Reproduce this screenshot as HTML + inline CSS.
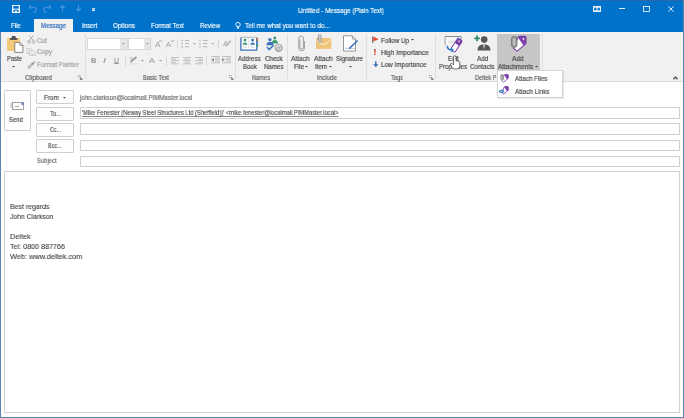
<!DOCTYPE html>
<html><head><meta charset="utf-8">
<style>
*{margin:0;padding:0;box-sizing:border-box}
html,body{width:684px;height:418px;overflow:hidden;background:#fff;font-family:"Liberation Sans",sans-serif}
.a{position:absolute}
.t{position:absolute;white-space:nowrap;line-height:10px;transform-origin:0 0;will-change:transform;-webkit-text-stroke:0.15px currentColor;font-family:"Liberation Sans",sans-serif}
svg{overflow:visible}
</style></head><body>
<div class="a" style="left:0px;top:0px;width:684px;height:32px;background:#0072c9"></div>
<div class="a" style="left:0px;top:0px;width:684px;height:1px;background:#2a6aac"></div>
<div class="t" style="left:298.00px;top:6px;font-size:7.40px;color:#fff;transform:scaleX(0.8547);">Untitled - Message (Plain Text)</div>
<svg class="a" style="left:12px;top:5px" width="8" height="8" viewBox="0 0 8 8"><rect x="0" y="0" width="8" height="8" fill="#f4f8fc"/><rect x="1.3" y="1" width="5.4" height="2.7" fill="#0072c9"/><rect x="1.5" y="4.7" width="5" height="2.3" fill="#0072c9"/><rect x="3" y="5.6" width="2" height="2.4" fill="#f4f8fc"/></svg>
<svg class="a" style="left:27.5px;top:5px" width="9" height="8" viewBox="0 0 9 8"><path d="M1 2.3 L3 0.5 M1 2.3 L3 4.1 M1.2 2.3 H5.5 Q8 2.3 8 5 Q8 7.5 5 7.5" stroke="#4a98dc" stroke-width="1.1" fill="none"/></svg>
<svg class="a" style="left:42.5px;top:5px" width="9" height="8" viewBox="0 0 9 8"><path d="M8 2.3 L6 0.5 M8 2.3 L6 4.1 M7.8 2.3 H3.5 Q1 2.3 1 5 Q1 7.5 4 7.5" stroke="#4a98dc" stroke-width="1.1" fill="none"/></svg>
<svg class="a" style="left:60px;top:5px" width="6" height="7" viewBox="0 0 6 7"><path d="M2.6 1 V6.5 M0.5 3 L2.6 0.9 L4.7 3" stroke="#4a98dc" stroke-width="1.1" fill="none"/></svg>
<svg class="a" style="left:75.5px;top:5px" width="6" height="7" viewBox="0 0 6 7"><path d="M2.6 0 V5.5 M0.5 3.5 L2.6 5.6 L4.7 3.5" stroke="#4a98dc" stroke-width="1.1" fill="none"/></svg>
<svg class="a" style="left:91.5px;top:8px" width="4" height="4" viewBox="0 0 4 4"><rect x="0" y="0" width="3" height="1" fill="#bcd6ee"/><path d="M0 1.5 H3 V2.5 L1.5 3.2 L0 2.5Z" fill="#fff"/></svg>
<svg class="a" style="left:593px;top:6px" width="8" height="6" viewBox="0 0 8 6"><rect x="0" y="0" width="8" height="6" fill="#e8f1fa"/><ellipse cx="2.3" cy="3" rx="1.3" ry="1.5" fill="#0072c9"/><ellipse cx="5.7" cy="3" rx="1.3" ry="1.5" fill="#0072c9"/></svg>
<div class="a" style="left:619px;top:8px;width:6px;height:1px;background:#e0ecf8"></div>
<svg class="a" style="left:643px;top:6px" width="7" height="6" viewBox="0 0 7 6"><rect x="0.5" y="0.5" width="6" height="5" fill="none" stroke="#e8f1fa" stroke-width="0.9"/></svg>
<svg class="a" style="left:668px;top:6px" width="6" height="6" viewBox="0 0 6 6"><path d="M0.3 0.3 L5.7 5.7 M5.7 0.3 L0.3 5.7" stroke="#f0f6fc" stroke-width="0.9"/></svg>
<div class="a" style="left:34px;top:19px;width:39px;height:13px;background:#f1f1f1"></div>
<div class="t" style="left:11.40px;top:21px;font-size:7.40px;color:#fff;transform:scaleX(0.8051);">File</div>
<div class="t" style="left:41.00px;top:21px;font-size:7.40px;color:#1f63b5;transform:scaleX(0.8327);">Message</div>
<div class="t" style="left:81.60px;top:21px;font-size:7.40px;color:#fff;transform:scaleX(0.8214);">Insert</div>
<div class="t" style="left:112.60px;top:21px;font-size:7.40px;color:#fff;transform:scaleX(0.8627);">Options</div>
<div class="t" style="left:151.00px;top:21px;font-size:7.40px;color:#fff;transform:scaleX(0.8478);">Format Text</div>
<div class="t" style="left:200.00px;top:21px;font-size:7.40px;color:#fff;transform:scaleX(0.8243);">Review</div>
<svg class="a" style="left:235px;top:22px" width="6" height="7" viewBox="0 0 6 7"><circle cx="3" cy="2.6" r="2.2" fill="none" stroke="#fff" stroke-width="0.9"/><path d="M2 5.5 H4 M2.2 6.5 H3.8" stroke="#fff" stroke-width="0.8"/></svg>
<div class="t" style="left:245.00px;top:21px;font-size:7.40px;color:#fff;transform:scaleX(0.8720);">Tell me what you want to do...</div>
<div class="a" style="left:0px;top:32px;width:684px;height:49px;background:#f1f1f1"></div>
<div class="a" style="left:0px;top:81px;width:684px;height:1px;background:#dcdcdc"></div>
<div class="a" style="left:0px;top:32px;width:1px;height:386px;background:#5d84ae"></div>
<div class="a" style="left:683px;top:0px;width:1px;height:418px;background:#5d84ae"></div>
<div class="a" style="left:0px;top:417px;width:684px;height:1px;background:#5d84ae"></div>
<div class="a" style="left:85px;top:34px;width:1px;height:45px;background:#dedede"></div>
<div class="a" style="left:235px;top:34px;width:1px;height:45px;background:#dedede"></div>
<div class="a" style="left:287px;top:34px;width:1px;height:45px;background:#dedede"></div>
<div class="a" style="left:366px;top:34px;width:1px;height:45px;background:#dedede"></div>
<div class="a" style="left:435px;top:34px;width:1px;height:45px;background:#dedede"></div>
<div class="a" style="left:542px;top:34px;width:1px;height:45px;background:#dedede"></div>
<svg class="a" style="left:78px;top:75px" width="5" height="5" viewBox="0 0 5 5"><path d="M0.5 3 V0.5 H3" stroke="#aaa" stroke-width="0.8" fill="none"/><path d="M4.3 4.3 L2 2 M4.5 4.5 H2.3 V2.3" stroke="#777" stroke-width="0.9" fill="none"/></svg>
<svg class="a" style="left:229px;top:75px" width="5" height="5" viewBox="0 0 5 5"><path d="M0.5 3 V0.5 H3" stroke="#aaa" stroke-width="0.8" fill="none"/><path d="M4.3 4.3 L2 2 M4.5 4.5 H2.3 V2.3" stroke="#777" stroke-width="0.9" fill="none"/></svg>
<svg class="a" style="left:429px;top:75px" width="5" height="5" viewBox="0 0 5 5"><path d="M0.5 3 V0.5 H3" stroke="#aaa" stroke-width="0.8" fill="none"/><path d="M4.3 4.3 L2 2 M4.5 4.5 H2.3 V2.3" stroke="#777" stroke-width="0.9" fill="none"/></svg>
<div class="t" style="left:25.00px;top:73px;font-size:7.00px;color:#5c5c5c;transform:scaleX(0.9012);">Clipboard</div>
<div class="t" style="left:142.90px;top:73px;font-size:7.00px;color:#5c5c5c;transform:scaleX(0.8183);">Basic Text</div>
<div class="t" style="left:252.00px;top:73px;font-size:7.00px;color:#5c5c5c;transform:scaleX(0.8119);">Names</div>
<div class="t" style="left:316.80px;top:73px;font-size:7.00px;color:#5c5c5c;transform:scaleX(0.8861);">Include</div>
<div class="t" style="left:391.00px;top:73px;font-size:7.00px;color:#5c5c5c;transform:scaleX(0.8049);">Tags</div>
<div class="t" style="left:475.00px;top:73px;font-size:7.00px;color:#5c5c5c;transform:scaleX(0.8127);">Deltek P</div>
<svg class="a" style="left:673px;top:75.5px" width="5" height="4" viewBox="0 0 5 4"><path d="M0.5 3.3 L2.5 1 L4.5 3.3" stroke="#555" stroke-width="1.4" fill="none"/></svg>
<svg class="a" style="left:6px;top:35px" width="18" height="19" viewBox="0 0 18 19"><rect x="1.1" y="3.1" width="12.7" height="12.9" fill="#f3c878"/><path d="M4 3 H11.4 V5 H4Z M5.4 3 L6.2 1 H9.2 L10 3Z" fill="#555"/><path d="M8.8 7.4 H13.9 L16.9 10.4 V17.4 H8.8Z" fill="#fff" stroke="#6a6a6a" stroke-width="0.8"/><path d="M13.9 7.4 V10.4 H16.9" fill="none" stroke="#6a6a6a" stroke-width="0.7"/></svg>
<div class="t" style="left:6.60px;top:54px;font-size:7.00px;color:#444;transform:scaleX(0.8380);">Paste</div>
<svg class="a" style="left:12px;top:66px" width="3" height="2" viewBox="0 0 3 2"><path d="M0 0 H3 L1.5 1.5Z" fill="#444"/></svg>
<svg class="a" style="left:26.5px;top:35px" width="9" height="9" viewBox="0 0 9 9"><path d="M2.2 0.5 L6 5.3 M6.3 0.5 L2.5 5.3" stroke="#a8a8a8" stroke-width="0.9"/><circle cx="2" cy="6.8" r="1.4" fill="none" stroke="#a8a8a8" stroke-width="0.9"/><circle cx="6.6" cy="6.8" r="1.4" fill="none" stroke="#a8a8a8" stroke-width="0.9"/></svg>
<div class="t" style="left:37.30px;top:36px;font-size:7.00px;color:#9c9c9c;transform:scaleX(0.8997);">Cut</div>
<svg class="a" style="left:26px;top:48px" width="10" height="8" viewBox="0 0 10 8"><path d="M0.8 0.5 H4.5 L6.5 2.5 V5.5 H0.8Z" fill="#f1f1f1" stroke="#c4c4c4" stroke-width="0.8"/><path d="M3.8 2.5 H7.5 L9.3 4.3 V7.5 H3.8Z" fill="#f4f4f4" stroke="#c4c4c4" stroke-width="0.8"/><path d="M5 5 H8 M5 6.3 H8" stroke="#e0b8c8" stroke-width="0.6"/><path d="M2 2.5 H4 M2 3.8 H3.5" stroke="#d8c0d0" stroke-width="0.6"/></svg>
<div class="t" style="left:37.30px;top:47px;font-size:7.00px;color:#9c9c9c;transform:scaleX(0.9302);">Copy</div>
<svg class="a" style="left:26.5px;top:59.5px" width="9" height="9" viewBox="0 0 9 9"><path d="M2 7.3 L5.3 4" stroke="#bdbdbd" stroke-width="3" stroke-linecap="round"/><path d="M5.2 3.2 L6.3 4.3" stroke="#8e8e8e" stroke-width="2"/><path d="M7.2 1 V3.4 M6 2.2 H8.4" stroke="#a0a0a0" stroke-width="0.7"/></svg>
<div class="t" style="left:37.30px;top:60px;font-size:7.00px;color:#9c9c9c;transform:scaleX(0.9030);">Format Painter</div>
<div class="a" style="left:87px;top:38px;width:41px;height:12px;background:#fff;border:1px solid #d8d8d8"></div>
<div class="a" style="left:120px;top:39px;width:7px;height:10px;background:#e6e6e6"></div>
<svg class="a" style="left:122px;top:43px" width="3" height="2" viewBox="0 0 3 2"><path d="M0 0 H3 L1.5 1.5Z" fill="#999"/></svg>
<div class="a" style="left:128px;top:38px;width:23px;height:12px;background:#fff;border:1px solid #d8d8d8"></div>
<div class="a" style="left:144px;top:39px;width:6px;height:10px;background:#e6e6e6"></div>
<svg class="a" style="left:146px;top:43px" width="3" height="2" viewBox="0 0 3 2"><path d="M0 0 H3 L1.5 1.5Z" fill="#999"/></svg>
<div class="t" style="left:154.50px;top:40px;font-size:8.00px;color:#a0a0a0;transform:scaleX(1.0307);-webkit-text-stroke:0">A</div>
<svg class="a" style="left:159px;top:40px" width="3" height="2" viewBox="0 0 3 2"><path d="M0 2 L1.5 0 L3 2" stroke="#999" stroke-width="0.7" fill="none"/></svg>
<div class="t" style="left:166.40px;top:40px;font-size:6.50px;color:#a0a0a0;transform:scaleX(1.1532);-webkit-text-stroke:0">A</div>
<svg class="a" style="left:171px;top:40px" width="3" height="2" viewBox="0 0 3 2"><path d="M0 0 L1.5 2 L3 0" stroke="#999" stroke-width="0.7" fill="none"/></svg>
<div class="a" style="left:177px;top:40px;width:1px;height:9px;background:#d8d8d8"></div>
<svg class="a" style="left:181px;top:39px" width="16" height="9" viewBox="0 0 16 9"><g fill="#a8a8a8"><circle cx="1.2" cy="1.5" r="0.8"/><circle cx="1.2" cy="4.6" r="0.8"/><circle cx="1.2" cy="7.8" r="0.8"/><rect x="4" y="1" width="4" height="0.8"/><rect x="4" y="4.2" width="4" height="0.8"/><rect x="4" y="7.4" width="4" height="0.8"/><path d="M12 4 H15 L13.5 5.5Z"/></g></svg>
<svg class="a" style="left:199px;top:39px" width="16" height="9" viewBox="0 0 16 9"><g fill="#a8a8a8"><rect x="0.5" y="0.8" width="1" height="1.6"/><rect x="0.5" y="3.9" width="1" height="1.6"/><rect x="0.5" y="7" width="1" height="1.6"/><rect x="4" y="1" width="4.5" height="0.8"/><rect x="4" y="4.2" width="4.5" height="0.8"/><rect x="4" y="7.4" width="4.5" height="0.8"/><path d="M12 4 H15 L13.5 5.5Z"/></g></svg>
<div class="a" style="left:218px;top:40px;width:1px;height:9px;background:#d8d8d8"></div>
<svg class="a" style="left:223px;top:39px" width="9" height="9" viewBox="0 0 9 9"><text x="0" y="7" font-size="8" fill="#a8a8a8" font-family="Liberation Sans">A</text><path d="M3 8 L8.5 2.5 L7 1 L1.5 6.5Z" fill="#b8b8b8" opacity="0.85"/></svg>
<div class="t" style="left:90.60px;top:56px;font-size:6.50px;color:#999;transform:scaleX(1.1071);font-weight:bold">B</div>
<div class="t" style="left:103.00px;top:56px;font-size:6.50px;color:#999;transform:scaleX(1.6613);font-style:italic">I</div>
<div class="t" style="left:114.00px;top:56px;font-size:6.50px;color:#999;transform:scaleX(1.0651);">U</div>
<div class="a" style="left:114px;top:63px;width:5px;height:1px;background:#999"></div>
<div class="a" style="left:125px;top:55px;width:1px;height:11px;background:#d8d8d8"></div>
<svg class="a" style="left:129px;top:56px" width="9" height="9" viewBox="0 0 9 9"><path d="M1.5 6 L7.5 1" stroke="#9a9a9a" stroke-width="1.7"/><path d="M0.5 1.5 L2.5 3.8 M2 0.8 L4 3" stroke="#a8a8a8" stroke-width="0.8"/><rect x="0.5" y="7.6" width="7.5" height="0.7" fill="#d9c6e2"/></svg>
<svg class="a" style="left:141px;top:60px" width="3" height="2" viewBox="0 0 3 2"><path d="M0 0 H3 L1.5 1.5Z" fill="#999"/></svg>
<div class="t" style="left:149.00px;top:56px;font-size:7.00px;color:#a0a0a0;transform:scaleX(1.2422);-webkit-text-stroke:0.1px currentColor">A</div>
<svg class="a" style="left:159px;top:60px" width="3" height="2" viewBox="0 0 3 2"><path d="M0 0 H3 L1.5 1.5Z" fill="#999"/></svg>
<div class="a" style="left:166px;top:55px;width:1px;height:11px;background:#d8d8d8"></div>
<svg class="a" style="left:171px;top:57px" width="8" height="8" viewBox="0 0 8 8"><g fill="#bdbdbd"><rect x="0" y="0.0" width="8" height="0.9"/><rect x="0" y="1.6" width="5" height="0.9"/><rect x="0" y="3.2" width="8" height="0.9"/><rect x="0" y="4.8" width="5" height="0.9"/><rect x="0" y="6.4" width="8" height="0.9"/></g></svg>
<svg class="a" style="left:182.6px;top:57px" width="8" height="8" viewBox="0 0 8 8"><g fill="#bdbdbd"><rect x="0" y="0.0" width="8" height="0.9"/><rect x="1.5" y="1.6" width="5" height="0.9"/><rect x="0" y="3.2" width="8" height="0.9"/><rect x="1.5" y="4.8" width="5" height="0.9"/><rect x="0" y="6.4" width="8" height="0.9"/></g></svg>
<svg class="a" style="left:194.5px;top:57px" width="8" height="8" viewBox="0 0 8 8"><g fill="#bdbdbd"><rect x="0" y="0.0" width="8" height="0.9"/><rect x="3" y="1.6" width="5" height="0.9"/><rect x="0" y="3.2" width="8" height="0.9"/><rect x="3" y="4.8" width="5" height="0.9"/><rect x="0" y="6.4" width="8" height="0.9"/></g></svg>
<div class="a" style="left:206px;top:55px;width:1px;height:11px;background:#d8d8d8"></div>
<svg class="a" style="left:210.6px;top:56px" width="9" height="8" viewBox="0 0 9 8"><g fill="#bdbdbd"><rect x="0" y="0.0" width="9" height="0.9"/><rect x="4" y="1.6" width="5" height="0.9"/><rect x="4" y="3.2" width="5" height="0.9"/><rect x="4" y="4.8" width="5" height="0.9"/><rect x="0" y="6.4" width="9" height="0.9"/></g><path d="M0 3.7 L3 1.9 V5.5Z" fill="#888"/></svg>
<svg class="a" style="left:222px;top:56px" width="9" height="8" viewBox="0 0 9 8"><g fill="#bdbdbd"><rect x="0" y="0.0" width="9" height="0.9"/><rect x="4" y="1.6" width="5" height="0.9"/><rect x="4" y="3.2" width="5" height="0.9"/><rect x="4" y="4.8" width="5" height="0.9"/><rect x="0" y="6.4" width="9" height="0.9"/></g><path d="M3 3.7 L0 1.9 V5.5Z" fill="#888"/></svg>
<svg class="a" style="left:240px;top:36px" width="19" height="16" viewBox="0 0 19 16"><rect x="1" y="1.3" width="15.6" height="12.8" fill="#fff"/><path d="M0.9 1.6 V14.2 H16.7 V1.6" fill="none" stroke="#3d72b8" stroke-width="1.3"/><path d="M0.9 1.6 Q5 0.6 8.8 1.6 Q12.6 0.6 16.7 1.6" fill="none" stroke="#9a9a9a" stroke-width="0.7"/><path d="M8.8 1.8 V13.5" stroke="#d4d4d4" stroke-width="0.7"/><circle cx="5" cy="4" r="1.5" fill="#3f9a73"/><path d="M2.6 8.8 Q2.8 6.5 5 6.5 Q7.2 6.5 7.4 8.8Z" fill="#3f9a73"/><circle cx="12.6" cy="4" r="1.5" fill="#3d72b8"/><path d="M10.2 8.8 Q10.4 6.5 12.6 6.5 Q14.8 6.5 15 8.8Z" fill="#3d72b8"/><path d="M3 10.2 H7 M3 11.6 H7 M10.6 10.2 H14.6 M10.6 11.6 H14.6" stroke="#d0d0d0" stroke-width="0.6"/><rect x="16.6" y="2" width="1.5" height="3" fill="#e2733e"/><rect x="16.6" y="5" width="1.5" height="3" fill="#5b8fd0"/><rect x="16.6" y="8" width="1.5" height="3" fill="#4aa07a"/></svg>
<div class="t" style="left:238.30px;top:54px;font-size:7.00px;color:#444;transform:scaleX(0.8801);">Address</div>
<div class="t" style="left:243.00px;top:62px;font-size:7.00px;color:#444;transform:scaleX(0.8650);">Book</div>
<svg class="a" style="left:265px;top:36px" width="19" height="17" viewBox="0 0 19 17"><circle cx="9.8" cy="1.9" r="1.5" fill="#3f9a73"/><path d="M6.6 7.5 Q6.8 4 9.8 4 Q12.8 4 13 7.5Z" fill="#3f9a73"/><circle cx="4.9" cy="3.6" r="1.7" fill="#3d72b8"/><path d="M1.4 9.2 Q1.6 5.7 4.9 5.7 Q8.2 5.7 8.4 9.2Z" fill="#3d72b8"/><path d="M1.9 11 L4.2 13.6 L8.8 9" stroke="#3d72b8" stroke-width="1.5" fill="none"/><circle cx="13.7" cy="12" r="3.7" fill="#f1f1f1" stroke="#8a8a8a" stroke-width="0.8"/><text x="13.7" y="14.2" font-size="6" text-anchor="middle" fill="#777" font-family="Liberation Sans">@</text></svg>
<div class="t" style="left:264.90px;top:54px;font-size:7.00px;color:#444;transform:scaleX(0.8921);">Check</div>
<div class="t" style="left:264.00px;top:62px;font-size:7.00px;color:#444;transform:scaleX(0.8795);">Names</div>
<svg class="a" style="left:297px;top:35px" width="9" height="17" viewBox="0 0 9 17"><path d="M2.8 4.5 V12 A1.8 1.8 0 0 0 6.4 12 V3.4 A2.3 2.3 0 0 0 1.8 3.4 V13 A2.8 2.8 0 0 0 7.4 13 V6" stroke="#9c9c9c" stroke-width="1" fill="none"/></svg>
<div class="t" style="left:291.40px;top:54px;font-size:7.00px;color:#444;transform:scaleX(0.9323);">Attach</div>
<div class="t" style="left:294.40px;top:62px;font-size:7.00px;color:#444;transform:scaleX(0.8955);">File</div>
<svg class="a" style="left:305px;top:66px" width="3" height="2" viewBox="0 0 3 2"><path d="M0 0 H3 L1.5 1.5Z" fill="#444"/></svg>
<svg class="a" style="left:315px;top:34px" width="17" height="15" viewBox="0 0 17 15"><rect x="1" y="4" width="15.3" height="10.9" fill="#f0c478"/><path d="M1.5 5.5 Q4 11 8.5 10.5 Q12.5 10 16 4.5" stroke="#fff4dc" stroke-width="0.9" fill="none"/><path d="M3.2 6.5 V2 A1.4 1.4 0 0 1 6 2 V7.5 A1.1 1.1 0 0 1 3.8 7.5 V3" stroke="#8a8a8a" stroke-width="0.8" fill="#d8d8e0"/></svg>
<div class="t" style="left:314.00px;top:54px;font-size:7.00px;color:#444;transform:scaleX(0.9373);">Attach</div>
<div class="t" style="left:315.30px;top:62px;font-size:7.00px;color:#444;transform:scaleX(0.8815);">Item</div>
<svg class="a" style="left:329px;top:66px" width="3" height="2" viewBox="0 0 3 2"><path d="M0 0 H3 L1.5 1.5Z" fill="#444"/></svg>
<svg class="a" style="left:343px;top:35px" width="16" height="17" viewBox="0 0 16 17"><path d="M0.5 0.8 H9.3 L12.5 4 V16 H0.5Z" fill="#fff" stroke="#8c8c8c" stroke-width="0.9"/><path d="M9.3 0.8 V4 H12.5" fill="none" stroke="#8c8c8c" stroke-width="0.8"/><path d="M2 13.4 H11.5" stroke="#a8cbea" stroke-width="0.9"/><path d="M6.2 13.6 L14.6 5.5" stroke="#3d72b8" stroke-width="1.5"/></svg>
<div class="t" style="left:336.00px;top:54px;font-size:7.00px;color:#444;transform:scaleX(0.9011);">Signature</div>
<svg class="a" style="left:348.5px;top:66px" width="3" height="2" viewBox="0 0 3 2"><path d="M0 0 H3 L1.5 1.5Z" fill="#444"/></svg>
<svg class="a" style="left:372px;top:36px" width="7" height="7" viewBox="0 0 7 7"><rect x="0" y="0.5" width="1.3" height="6.5" fill="#7a7a7a"/><path d="M1.3 0.6 L6.6 3.2 L1.3 5.6Z" fill="#e8473a"/></svg>
<div class="t" style="left:381.40px;top:36px;font-size:7.00px;color:#444;transform:scaleX(0.8998);">Follow Up</div>
<svg class="a" style="left:411px;top:39px" width="3" height="2" viewBox="0 0 3 2"><path d="M0 0 H3 L1.5 1.5Z" fill="#444"/></svg>
<svg class="a" style="left:373.8px;top:49px" width="2" height="6" viewBox="0 0 2 6"><rect x="0" y="0" width="1.7" height="3.6" fill="#e0584a"/><rect x="0" y="4.4" width="1.7" height="1.5" fill="#e0584a"/></svg>
<div class="t" style="left:381.40px;top:48px;font-size:7.00px;color:#444;transform:scaleX(0.9308);">High Importance</div>
<svg class="a" style="left:372.5px;top:61px" width="6" height="7" viewBox="0 0 6 7"><path d="M2.8 0.2 V4.5" stroke="#3d72b8" stroke-width="1.5"/><path d="M0.2 3.3 L2.8 6.2 L5.4 3.3Z" fill="#3d72b8"/></svg>
<div class="t" style="left:381.40px;top:60px;font-size:7.00px;color:#444;transform:scaleX(0.9117);">Low Importance</div>
<svg class="a" style="left:444px;top:35px" width="19" height="18" viewBox="0 0 19 18"><path d="M1.2 10.2 V1.5 H17.2 V4" fill="none" stroke="#8a8a8a" stroke-width="1"/><rect x="1.7" y="2" width="15" height="8" fill="#f7f7f7"/><path d="M4.5 6 H11 M4.5 7.5 H9" stroke="#cfcfcf" stroke-width="0.7"/><g transform="translate(12.4 10.2) rotate(-56)"><rect x="-7" y="-2.7" width="14" height="5.4" rx="1.6" fill="#fff" stroke="#7d3faa" stroke-width="1"/><path d="M1 -2.7 H5.4 Q7 -2.7 7 -1.1 V1.1 Q7 2.7 5.4 2.7 H1Z" fill="#7d3faa"/><circle cx="4.8" cy="0" r="0.8" fill="#fff"/></g><circle cx="14.3" cy="3.3" r="0.9" fill="#2f7fd0"/><path d="M3.3 10.8 Q3.3 15 7.8 15" stroke="#2f7fd0" stroke-width="1.6" fill="none"/><path d="M7 12.5 L10 15 L7 17.3Z" fill="#2f7fd0"/></svg>
<div class="t" style="left:447.90px;top:54px;font-size:7.00px;color:#444;transform:scaleX(0.8954);">Edit</div>
<div class="t" style="left:439.00px;top:62px;font-size:7.00px;color:#444;transform:scaleX(0.8777);">Properties</div>
<svg class="a" style="left:450px;top:55px" width="11" height="15" viewBox="0 0 11 15"><path d="M3.6 6 V1.8 Q3.6 0.8 4.8 0.8 Q6 0.8 6 1.8 V5.8 Q7.5 5.5 8 6.2 Q9.5 6.2 9.8 7.5 V11 Q9.8 14 7 14 H4.5 Q3 14 2 12.5 L0.6 9.5 Q0.3 8.3 1.5 8.3 Q2.5 8.5 3.6 10Z" fill="#fff" stroke="#333" stroke-width="0.7"/></svg>
<svg class="a" style="left:474px;top:35px" width="17" height="16" viewBox="0 0 17 16"><path d="M3 0.6 V6.2 M0.3 3.4 H5.9" stroke="#2e8b6e" stroke-width="1.7"/><circle cx="10.2" cy="4.6" r="3.3" fill="#555"/><path d="M3.5 15.4 Q3.5 9.4 10 9.2 Q16.5 9.4 16.5 15.4Z" fill="#555"/><path d="M9 9.4 L10 14.5 L11 9.4Z" fill="#ddd"/></svg>
<div class="t" style="left:477.40px;top:54px;font-size:7.00px;color:#444;transform:scaleX(0.9073);">Add</div>
<div class="t" style="left:470.20px;top:62px;font-size:7.00px;color:#444;transform:scaleX(0.8870);">Contacts</div>
<div class="a" style="left:497px;top:34px;width:43px;height:36px;background:#c6c6c6"></div>
<svg class="a" style="left:504px;top:33px" width="24" height="20" viewBox="0 0 24 20"><path d="M14 4.5 Q14.5 3.4 16 3.4 H21 Q22 3.4 22 4.6 V10.5 L13 18.3 L9.5 15 Z" fill="#fff" stroke="#7d3faa" stroke-width="1.1"/><path d="M14 4.5 Q14.5 3.4 16 3.4 H21 Q22 3.4 22 4.6 V10.5 L19.6 12.4 Z" fill="#7d3faa"/><circle cx="19.5" cy="5.8" r="0.9" fill="#fff"/><rect x="7.6" y="3.6" width="5.2" height="10.5" rx="2.6" fill="#a9a9a9" stroke="#7c7c7c" stroke-width="1.2"/><path d="M10.2 5.5 V11.5" stroke="#d8d8d8" stroke-width="0.9"/></svg>
<div class="t" style="left:512.40px;top:54px;font-size:7.00px;color:#444;transform:scaleX(0.9394);">Add</div>
<div class="t" style="left:498.20px;top:62px;font-size:7.00px;color:#444;transform:scaleX(0.8996);">Attachments</div>
<svg class="a" style="left:535px;top:66px" width="3" height="2" viewBox="0 0 3 2"><path d="M0 0 H3 L1.5 1.5Z" fill="#444"/></svg>
<div class="a" style="left:497px;top:70px;width:66px;height:28px;background:#fff;border:1px solid #d4d4d4;box-shadow:1px 1px 1px rgba(0,0,0,0.08)"></div>
<svg class="a" style="left:500px;top:74px" width="10" height="9" viewBox="0 0 10 9"><g transform="scale(0.52) translate(-6 -2.5)"><path d="M14 4.5 Q14.5 3.4 16 3.4 H21 Q22 3.4 22 4.6 V10.5 L13 18.3 L9.5 15 Z" fill="#fff" stroke="#7d3faa" stroke-width="1.6"/><path d="M14 4.5 Q14.5 3.4 16 3.4 H21 Q22 3.4 22 4.6 V10.5 L19.6 12.4 Z" fill="#7d3faa"/><rect x="7.6" y="3.6" width="5.2" height="10.5" rx="2.6" fill="#b0b0b0" stroke="#888" stroke-width="1.6"/></g></svg>
<div class="t" style="left:514.90px;top:74px;font-size:7.00px;color:#444;transform:scaleX(0.8833);">Attach Files</div>
<svg class="a" style="left:500px;top:86px" width="10" height="9" viewBox="0 0 10 9"><g transform="scale(0.52) translate(-6 -2.5)"><path d="M14 4.5 Q14.5 3.4 16 3.4 H21 Q22 3.4 22 4.6 V10.5 L13 18.3 L9.5 15 Z" fill="#fff" stroke="#7d3faa" stroke-width="1.6"/><path d="M14 4.5 Q14.5 3.4 16 3.4 H21 Q22 3.4 22 4.6 V10.5 L19.6 12.4 Z" fill="#7d3faa"/><ellipse cx="9" cy="13" rx="4.5" ry="2.6" fill="#4a86c8" stroke="#2f6db0" stroke-width="1.2"/><path d="M6.5 13 H11" stroke="#fff" stroke-width="1"/></g></svg>
<div class="t" style="left:514.90px;top:87px;font-size:7.00px;color:#444;transform:scaleX(0.8996);">Attach Links</div>
<div class="a" style="left:4px;top:90px;width:27px;height:41px;background:#fdfdfd;border:1px solid #cfcfcf;border-radius:1px"></div>
<svg class="a" style="left:10px;top:102px" width="14" height="8" viewBox="0 0 14 8"><rect x="2.5" y="0.5" width="11" height="7" fill="#fff" stroke="#8a8a8a" stroke-width="0.8"/><path d="M5 4.5 H9" stroke="#888" stroke-width="0.7"/><rect x="11.5" y="1" width="1.8" height="1.8" fill="#3a72b8"/><path d="M0 2 H2 M0.5 3.5 H2 M0 5 H2" stroke="#999" stroke-width="0.6"/></svg>
<div class="t" style="left:9.00px;top:115px;font-size:7.00px;color:#444;transform:scaleX(0.8442);">Send</div>
<div class="a" style="left:36px;top:90px;width:38px;height:14px;background:#fdfdfd;border:1px solid #cfcfcf;border-radius:1px"></div>
<div class="t" style="left:44.40px;top:93px;font-size:7.00px;color:#444;transform:scaleX(0.9063);">From</div>
<svg class="a" style="left:62.5px;top:97px" width="3" height="2" viewBox="0 0 3 2"><path d="M0 0 H3 L1.5 1.5Z" fill="#444"/></svg>
<div class="a" style="left:36px;top:107px;width:38px;height:14px;background:#fdfdfd;border:1px solid #cfcfcf;border-radius:1px"></div>
<div class="t" style="left:49.60px;top:109px;font-size:7.00px;color:#555;transform:scaleX(0.8316);">To...</div>
<div class="a" style="left:36px;top:123px;width:38px;height:14px;background:#fdfdfd;border:1px solid #cfcfcf;border-radius:1px"></div>
<div class="t" style="left:49.60px;top:125px;font-size:7.00px;color:#555;transform:scaleX(0.7645);">Cc...</div>
<div class="a" style="left:36px;top:139px;width:38px;height:14px;background:#fdfdfd;border:1px solid #cfcfcf;border-radius:1px"></div>
<div class="t" style="left:48.40px;top:141px;font-size:7.00px;color:#555;transform:scaleX(0.7827);">Bcc...</div>
<div class="t" style="left:36.80px;top:156px;font-size:7.00px;color:#5a5a5a;transform:scaleX(0.8352);-webkit-text-stroke:0.1px currentColor">Subject</div>
<div class="t" style="left:80.40px;top:93px;font-size:7.00px;color:#666;transform:scaleX(0.8821);">john.clarkson@localmail.PIMMaster.local</div>
<div class="a" style="left:80px;top:107px;width:600px;height:12px;background:#fff;border:1px solid #d0d0d0"></div>
<div class="t" style="left:82.10px;top:108px;font-size:6.60px;color:#404040;transform:scaleX(0.8772);-webkit-text-stroke:0.1px currentColor;text-decoration:underline;text-decoration-color:#8a8a8a">'Mike Fenester (Neway Steel Structures Ltd (Sheffield))' &lt;mike.fenester@localmail.PIMMaster.local&gt;</div>
<div class="a" style="left:80px;top:123px;width:600px;height:12px;background:#fff;border:1px solid #d0d0d0"></div>
<div class="a" style="left:80px;top:140px;width:600px;height:11px;background:#fff;border:1px solid #d0d0d0"></div>
<div class="a" style="left:80px;top:156px;width:600px;height:11px;background:#fff;border:1px solid #d0d0d0"></div>
<div class="a" style="left:4px;top:171px;width:676px;height:242px;border:1px solid #d0d0d0"></div>
<div class="t" style="left:10.10px;top:202px;font-size:7.60px;color:#3a3a3a;transform:scaleX(0.9168);-webkit-text-stroke:0.1px currentColor">Best regards</div>
<div class="t" style="left:10.10px;top:212px;font-size:7.60px;color:#3a3a3a;transform:scaleX(0.8955);-webkit-text-stroke:0.1px currentColor">John Clarkson</div>
<div class="t" style="left:10.10px;top:232px;font-size:7.60px;color:#3a3a3a;transform:scaleX(0.9609);-webkit-text-stroke:0.1px currentColor">Deltek</div>
<div class="t" style="left:10.10px;top:242px;font-size:7.60px;color:#3a3a3a;transform:scaleX(0.9432);-webkit-text-stroke:0.1px currentColor">Tel: 0800 887766</div>
<div class="t" style="left:10.10px;top:252px;font-size:7.60px;color:#3a3a3a;transform:scaleX(0.9703);-webkit-text-stroke:0.1px currentColor">Web: www.deltek.com</div>
</body></html>
